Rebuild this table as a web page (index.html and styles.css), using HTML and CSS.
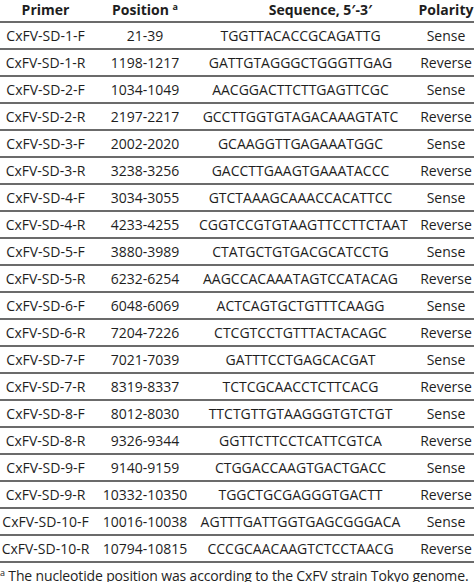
FILE: index.html
```html
<!DOCTYPE html>
<html>
<head>
<meta charset="utf-8">
<link rel="stylesheet" href="styles.css">
</head>
<body>
<table class="primers">
  <colgroup>
    <col class="c-primer"><col class="c-pos"><col class="c-seq"><col class="c-pol">
  </colgroup>
  <thead>
    <tr><th>Primer</th><th>Position <sup>a</sup></th><th class="seq-h">Sequence, 5′-3′</th><th>Polarity</th></tr>
  </thead>
  <tbody>
    <tr><td>CxFV-SD-1-F</td><td>21-39</td><td class="seq">TGGTTACACCGCAGATTG</td><td>Sense</td></tr>
    <tr><td>CxFV-SD-1-R</td><td>1198-1217</td><td class="seq">GATTGTAGGGCTGGGTTGAG</td><td>Reverse</td></tr>
    <tr><td>CxFV-SD-2-F</td><td>1034-1049</td><td class="seq">AACGGACTTCTTGAGTTCGC</td><td>Sense</td></tr>
    <tr><td>CxFV-SD-2-R</td><td>2197-2217</td><td class="seq">GCCTTGGTGTAGACAAAGTATC</td><td>Reverse</td></tr>
    <tr><td>CxFV-SD-3-F</td><td>2002-2020</td><td class="seq">GCAAGGTTGAGAAATGGC</td><td>Sense</td></tr>
    <tr><td>CxFV-SD-3-R</td><td>3238-3256</td><td class="seq">GACCTTGAAGTGAAATACCC</td><td>Reverse</td></tr>
    <tr><td>CxFV-SD-4-F</td><td>3034-3055</td><td class="seq">GTCTAAAGCAAACCACATTCC</td><td>Sense</td></tr>
    <tr><td>CxFV-SD-4-R</td><td>4233-4255</td><td class="seq">CGGTCCGTGTAAGTTCCTTCTAAT</td><td>Reverse</td></tr>
    <tr><td>CxFV-SD-5-F</td><td>3880-3989</td><td class="seq">CTATGCTGTGACGCATCCTG</td><td>Sense</td></tr>
    <tr><td>CxFV-SD-5-R</td><td>6232-6254</td><td class="seq">AAGCCACAAATAGTCCATACAG</td><td>Reverse</td></tr>
    <tr><td>CxFV-SD-6-F</td><td>6048-6069</td><td class="seq">ACTCAGTGCTGTTTCAAGG</td><td>Sense</td></tr>
    <tr><td>CxFV-SD-6-R</td><td>7204-7226</td><td class="seq">CTCGTCCTGTTTACTACAGC</td><td>Reverse</td></tr>
    <tr><td>CxFV-SD-7-F</td><td>7021-7039</td><td class="seq">GATTTCCTGAGCACGAT</td><td>Sense</td></tr>
    <tr><td>CxFV-SD-7-R</td><td>8319-8337</td><td class="seq">TCTCGCAACCTCTTCACG</td><td>Reverse</td></tr>
    <tr><td>CxFV-SD-8-F</td><td>8012-8030</td><td class="seq">TTCTGTTGTAAGGGTGTCTGT</td><td>Sense</td></tr>
    <tr><td>CxFV-SD-8-R</td><td>9326-9344</td><td class="seq">GGTTCTTCCTCATTCGTCA</td><td>Reverse</td></tr>
    <tr><td>CxFV-SD-9-F</td><td>9140-9159</td><td class="seq">CTGGACCAAGTGACTGACC</td><td>Sense</td></tr>
    <tr><td>CxFV-SD-9-R</td><td>10332-10350</td><td class="seq">TGGCTGCGAGGGTGACTT</td><td>Reverse</td></tr>
    <tr><td>CxFV-SD-10-F</td><td>10016-10038</td><td class="seq">AGTTTGATTGGTGAGCGGGACA</td><td>Sense</td></tr>
    <tr><td>CxFV-SD-10-R</td><td>10794-10815</td><td class="seq">CCCGCAACAAGTCTCCTAACG</td><td>Reverse</td></tr>
  </tbody>
</table>
<p class="note"><sup>a</sup> The nucleotide position was according to the CxFV strain Tokyo genome.</p>
</body>
</html>
```

FILE: styles.css
```css
html, body {
  margin: 0;
  padding: 0;
  background: #ffffff;
}
body {
  width: 474px;
  height: 582px;
  overflow: hidden;
  font-family: "Open Sans", "Noto Sans", sans-serif;
  color: #1e1e1e;
}
.primers {
  width: 474px;
  border-collapse: collapse;
  table-layout: fixed;
  font-size: 14px;
}
.c-primer { width: 91px; }
.c-pos { width: 108px; }
.c-seq { width: 219px; }
.c-pol { width: 56px; }
.primers th {
  font-weight: 700;
  height: 21px;
  padding: 0;
  text-align: center;
  vertical-align: top;
  line-height: 20px;
  border-bottom: 2px solid #6b6b6b;
  white-space: nowrap;
}
.primers th.seq-h {
  padding-left: 24px;
}
.primers th sup {
  font-size: 9px;
  vertical-align: 5px;
  line-height: 0;
}
.primers td {
  height: 25px;
  padding: 0;
  text-align: center;
  line-height: 25px;
  border-bottom: 2px solid #6b6b6b;
  white-space: nowrap;
}
.primers td.seq {
  padding-right: 16px;
}
.note {
  margin: 0;
  padding: 4px 0 0 0;
  font-size: 14px;
  line-height: 18px;
  letter-spacing: -0.15px;
  white-space: nowrap;
}
.note sup {
  font-size: 9px;
  vertical-align: 5px;
  line-height: 0;
}
```
